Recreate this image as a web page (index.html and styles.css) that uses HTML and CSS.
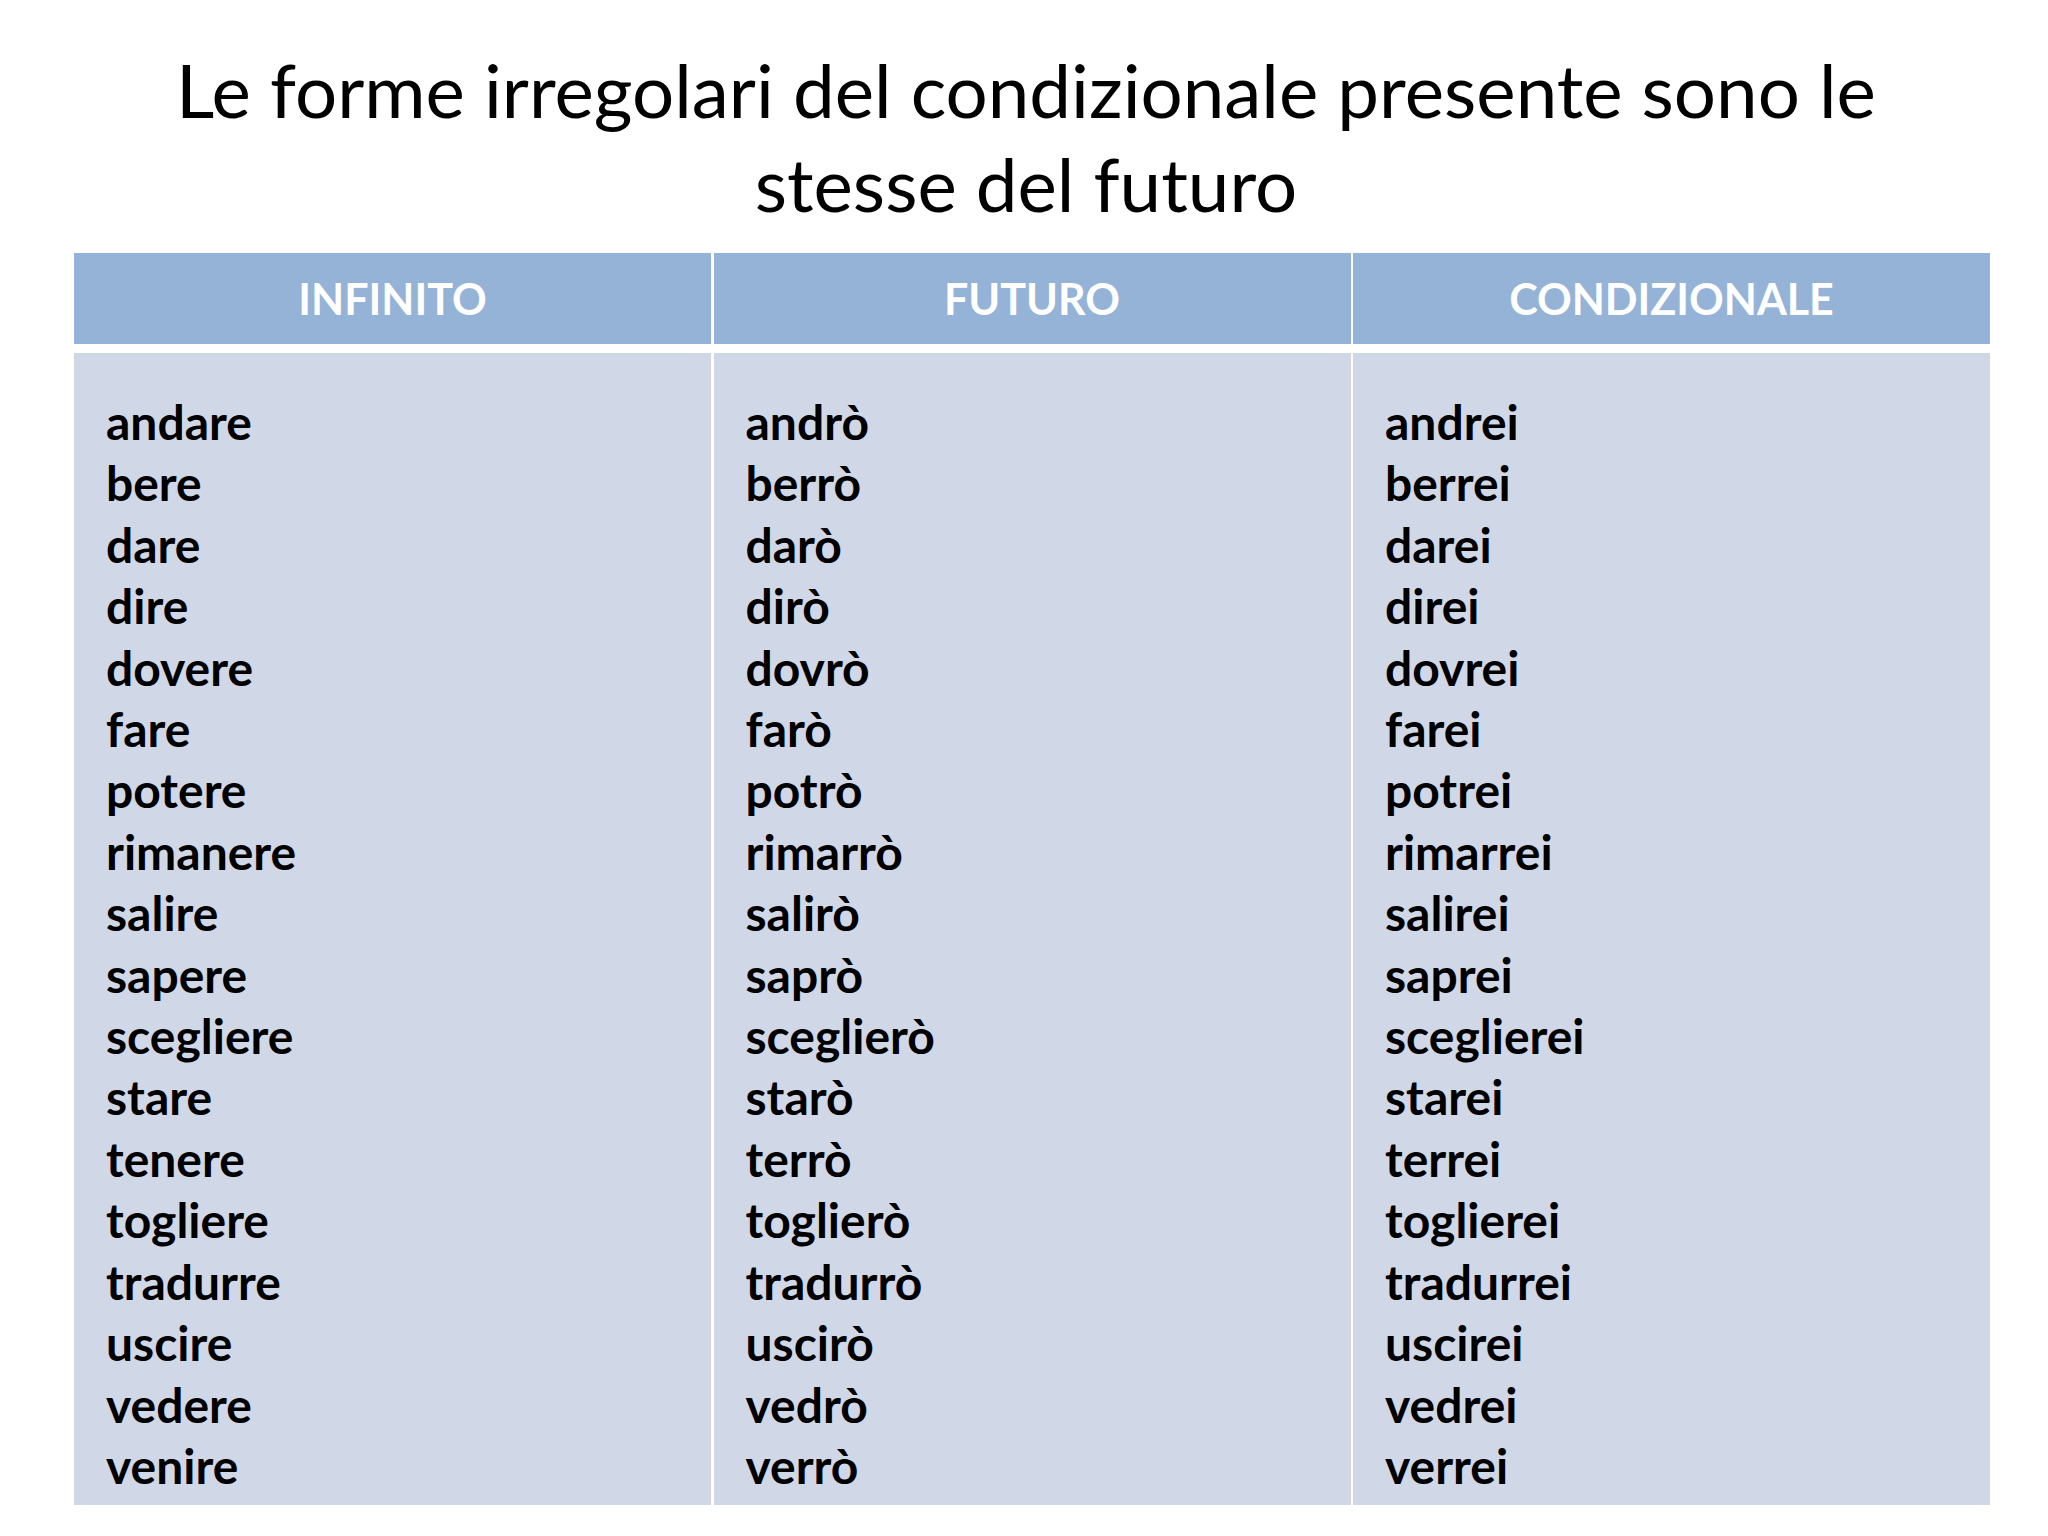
FILE: index.html
```html
<!DOCTYPE html>
<html lang="it">
<head>
<meta charset="utf-8">
<title>Condizionale presente</title>
<link rel="stylesheet" href="styles.css">
</head>
<body>
<div class="slide">
  <h1 class="title">Le forme irregolari del condizionale presente sono le stesse del futuro</h1>
  <div class="table">
    <div class="head">INFINITO</div>
    <div class="head">FUTURO</div>
    <div class="head">CONDIZIONALE</div>
    <div class="sep"></div>
    <div class="cell">andare<br>bere<br>dare<br>dire<br>dovere<br>fare<br>potere<br>rimanere<br>salire<br>sapere<br>scegliere<br>stare<br>tenere<br>togliere<br>tradurre<br>uscire<br>vedere<br>venire</div>
    <div class="cell">andrò<br>berrò<br>darò<br>dirò<br>dovrò<br>farò<br>potrò<br>rimarrò<br>salirò<br>saprò<br>sceglierò<br>starò<br>terrò<br>toglierò<br>tradurrò<br>uscirò<br>vedrò<br>verrò</div>
    <div class="cell">andrei<br>berrei<br>darei<br>direi<br>dovrei<br>farei<br>potrei<br>rimarrei<br>salirei<br>saprei<br>sceglierei<br>starei<br>terrei<br>toglierei<br>tradurrei<br>uscirei<br>vedrei<br>verrei</div>
  </div>
</div>
</body>
</html>
```
FILE: styles.css
```css
html, body {
  margin: 0;
  padding: 0;
  background: #ffffff;
}
.slide {
  width: 2048px;
  height: 1536px;
  box-sizing: border-box;
  padding: 0 58px 0 74px;
  font-family: Lato, "Open Sans", sans-serif;
  color: #000000;
}
.title {
  margin: 0;
  padding: 42px 72px 0 60px;
  height: 253px;
  box-sizing: border-box;
  font-weight: 400;
  font-size: 74.5px;
  line-height: 94px;
  text-align: center;
}
.table {
  display: grid;
  grid-template-columns: 1fr 1fr 1fr;
  grid-template-rows: 91px 9px 1152px;
  column-gap: 2.5px;
}
.head {
  background: #95b3d7;
  color: #ffffff;
  font-weight: 700;
  font-size: 43px;
  line-height: 91px;
  text-align: center;
  padding-bottom: 20px;
  box-sizing: border-box;
}
.sep {
  grid-column: 1 / 4;
}
.cell {
  background: #d0d8e8;
  font-weight: 700;
  font-size: 48px;
  line-height: 61.4px;
  padding: 38px 0 0 32px;
}
```
